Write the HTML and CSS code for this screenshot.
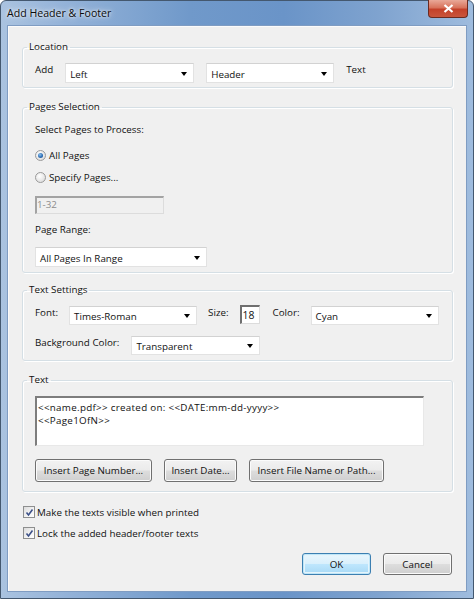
FILE: index.html
```html
<!DOCTYPE html>
<html lang="en">
<head>
  <meta charset="UTF-8">
  <title>Add Header &amp; Footer</title>
  <link rel="stylesheet" href="styles.css">
</head>
<body>
  <div class="window">
    <div class="titlebar">
      <span class="title">Add Header &amp; Footer</span>
      <div class="close">
        <svg width="11" height="9" viewBox="0 0 11 9"><path d="M1.5 1 L9.5 8 M9.5 1 L1.5 8" stroke="#fff" stroke-width="2.2"/></svg>
      </div>
    </div>

    <div class="client">
      <fieldset class="group location">
        <legend>Location</legend>
        <div class="row">
          <span class="label">Add</span>
          <div class="combo combo-left"><span>Left</span><i class="arrow"></i></div>
          <div class="combo combo-pos"><span>Header</span><i class="arrow"></i></div>
          <span class="label">Text</span>
        </div>
      </fieldset>

      <fieldset class="group pages">
        <legend>Pages Selection</legend>
        <div class="line">Select Pages to Process:</div>
        <div class="radio-row first"><span class="radio checked"></span>All Pages</div>
        <div class="radio-row"><span class="radio"></span>Specify Pages...</div>
        <div class="edit disabled">1-32</div>
        <div class="line range-label">Page Range:</div>
        <div class="combo combo-range"><span>All Pages In Range</span><i class="arrow"></i></div>
      </fieldset>

      <fieldset class="group settings">
        <legend>Text Settings</legend>
        <div class="row">
          <span class="label">Font:</span>
          <div class="combo combo-font"><span>Times-Roman</span><i class="arrow"></i></div>
          <span class="label size-label">Size:</span>
          <div class="edit size">18</div>
          <span class="label color-label">Color:</span>
          <div class="combo combo-color"><span>Cyan</span><i class="arrow"></i></div>
        </div>
        <div class="row second">
          <span class="label">Background Color:</span>
          <div class="combo combo-bg"><span>Transparent</span><i class="arrow"></i></div>
        </div>
      </fieldset>

      <fieldset class="group text">
        <legend>Text</legend>
        <div class="textarea">&lt;&lt;name.pdf&gt;&gt; created on: &lt;&lt;DATE:mm-dd-yyyy&gt;&gt;<br>&lt;&lt;Page1OfN&gt;&gt;</div>
        <div class="buttons">
          <button class="btn btn-page">Insert Page Number...</button>
          <button class="btn btn-date">Insert Date...</button>
          <button class="btn btn-file">Insert File Name or Path...</button>
        </div>
      </fieldset>

      <div class="check-row first"><span class="check"><svg width="9" height="9" viewBox="0 0 9 9"><path d="M1.5 4.5 L3.5 7 L7.5 1.5" fill="none" stroke="#3d5188" stroke-width="1.6"/></svg></span>Make the texts visible when printed</div>
      <div class="check-row"><span class="check"><svg width="9" height="9" viewBox="0 0 9 9"><path d="M1.5 4.5 L3.5 7 L7.5 1.5" fill="none" stroke="#3d5188" stroke-width="1.6"/></svg></span>Lock the added header/footer texts</div>

      <div class="actions">
        <button class="btn btn-ok">OK</button>
        <button class="btn btn-cancel">Cancel</button>
      </div>
    </div>
  </div>
</body>
</html>
```

FILE: styles.css
```css
html, body {
  margin: 0;
  padding: 0;
}
body {
  width: 474px;
  height: 599px;
  font-family: 'Open Sans', 'Noto Sans', sans-serif;
  font-size: 9.8px;
  color: #111;
  background-color: #fff;
}
.window {
  box-sizing: border-box;
  width: 474px;
  height: 599px;
  border: 1px solid #44586f;
  border-radius: 6px 6px 0 0;
  background: linear-gradient(90deg, #aac3e0 0%, #93b2d8 14%, #7099ca 40%, #6a94c8 60%, #7fa3cf 80%, #9fbcde 100%);
  display: flex;
  flex-direction: column;
}
.titlebar {
  height: 24px;
  display: flex;
  justify-content: space-between;
  align-items: flex-start;
}
.title {
  padding: 4px 0 0 6px;
  font-size: 10.6px;
  line-height: 16px;
  color: #0b0b0b;
  text-shadow: 0 0 6px rgba(255, 255, 255, 0.9), 0 0 3px rgba(255, 255, 255, 0.8);
}
.close {
  width: 40px;
  height: 18px;
  margin: -1px 5px 0 0;
  box-sizing: border-box;
  border: 1px solid #6b2a20;
  border-top: none;
  border-radius: 0 0 4px 4px;
  background: linear-gradient(#e9a898 0%, #d8735c 45%, #c4412a 55%, #c9553c 100%);
  display: flex;
  align-items: center;
  justify-content: center;
}
.client {
  height: 567px;
  margin: 0 6px;
  box-sizing: border-box;
  border: 1px solid #7f9cc2;
  background-color: #f0f0f0;
  box-shadow: inset 1px 1px 0 #fbfbfb;
  padding: 0 13px 0 14px;
}
.group {
  margin: 0;
  padding: 0 10px 0 12px;
  border: 1px solid #d5dfe5;
  border-radius: 3px;
  box-shadow: inset 1px 1px 0 #fff, 1px 1px 0 #fff;
}
.group legend {
  margin-left: -8px;
  padding: 0 2px;
  line-height: 16px;
}
.location {
  margin-top: 13px;
  padding-top: 8px;
  padding-bottom: 4px;
}
.pages {
  margin-top: 11px;
  padding-top: 7px;
  padding-bottom: 5px;
}
.settings {
  margin-top: 9px;
  padding-top: 8px;
  padding-bottom: 5px;
}
.text {
  margin-top: 11px;
  padding-top: 8px;
  padding-bottom: 9px;
}
.row {
  display: flex;
  align-items: flex-start;
}
.row .label {
  line-height: 16px;
  margin-top: -1px;
}
.row.second {
  margin-top: 11px;
}
.line {
  line-height: 16px;
}
.combo {
  box-sizing: border-box;
  height: 20px;
  background-color: #fff;
  border: 1px solid #e2e2e2;
  border-top-color: #d2d2d2;
  display: flex;
  align-items: center;
  justify-content: space-between;
  padding: 2px 6px 0 4px;
}
.arrow {
  width: 0;
  height: 0;
  border-left: 3.5px solid transparent;
  border-right: 3.5px solid transparent;
  border-top: 4px solid #000;
  margin-top: -1px;
}
.combo-left {
  width: 129px;
  margin-left: 12px;
}
.combo-pos {
  width: 128px;
  margin-left: 12px;
  margin-right: 12px;
}
.radio-row {
  display: flex;
  align-items: center;
  height: 16px;
  margin-top: 6px;
}
.radio-row.first {
  margin-top: 9px;
}
.radio {
  box-sizing: border-box;
  width: 11px;
  height: 11px;
  border-radius: 50%;
  border: 1px solid #9a9a9a;
  background: radial-gradient(circle at 40% 35%, #fff 0%, #e6e6e6 60%, #d4d4d4 100%);
  margin-right: 3px;
  display: flex;
  align-items: center;
  justify-content: center;
}
.radio.checked::before {
  content: '';
  width: 5px;
  height: 5px;
  border-radius: 50%;
  background: radial-gradient(circle at 40% 35%, #8ec2ee 0%, #2e6fb6 55%, #1c4b86 100%);
}
.edit {
  box-sizing: border-box;
  height: 18px;
  background-color: #fff;
  border: 1px solid #dcdcdc;
  border-top-color: #9a9a9a;
  border-left-color: #9a9a9a;
  line-height: 16px;
  padding-left: 2px;
}
.edit.disabled {
  width: 129px;
  margin-top: 11px;
  background-color: #f0f0f0;
  color: #8d8d8d;
  border-top: 2px solid #a3a3a3;
  border-left: 2px solid #a3a3a3;
  line-height: 14px;
  padding-left: 0;
}
.range-label {
  margin-top: 8px;
}
.combo-range {
  width: 172px;
  margin-top: 9px;
}
.settings .combo {
  height: 19px;
}
.combo-font {
  width: 128px;
  margin-left: 11px;
}
.size-label {
  margin-left: 11px;
}
.edit.size {
  width: 20px;
  height: 19px;
  margin-left: 11px;
  margin-top: -1px;
  border-top: 2px solid #6f6f6f;
  border-left: 2px solid #6f6f6f;
  padding-left: 1px;
  font-size: 10.4px;
}
.color-label {
  margin-left: 13px;
}
.combo-color {
  width: 128px;
  margin-left: 11px;
}
.combo-bg {
  width: 129px;
  margin-left: 12px;
}
.textarea {
  box-sizing: border-box;
  width: 389px;
  height: 50px;
  background-color: #fff;
  border: 1px solid #e8e8e8;
  border-top: 2px solid #7d7d7d;
  border-left: 2px solid #7d7d7d;
  padding: 3px 0 0 1px;
  line-height: 13px;
  letter-spacing: 0.3px;
}
.buttons {
  display: flex;
  gap: 12px;
  margin-top: 13px;
}
.btn {
  box-sizing: border-box;
  height: 23px;
  font-family: inherit;
  font-size: inherit;
  color: #111;
  border: 1px solid #707070;
  border-radius: 3px;
  background: linear-gradient(#f2f2f2 0%, #ebebeb 48%, #dddddd 52%, #cfcfcf 100%);
  box-shadow: inset 0 0 0 1px #fbfbfb;
  padding: 0;
}
.btn-page {
  width: 117px;
}
.btn-date {
  width: 73px;
}
.btn-file {
  width: 135px;
}
.check-row {
  display: flex;
  align-items: center;
  height: 16px;
  margin-top: 5px;
  padding-left: 1px;
}
.check-row.first {
  margin-top: 12px;
}
.check {
  box-sizing: border-box;
  width: 12px;
  height: 12px;
  border: 1px solid #8e8f8f;
  background: linear-gradient(135deg, #dcdcdc 0%, #f4f4f4 60%, #fff 100%);
  margin-right: 2px;
  display: flex;
  align-items: center;
  justify-content: center;
}
.actions {
  display: flex;
  justify-content: flex-end;
  gap: 12px;
  margin-top: 12px;
  margin-right: 1px;
}
.actions .btn {
  height: 22px;
  width: 69px;
}
.btn-ok {
  border-color: #3c7fb1;
  background: linear-gradient(#eaf6fd 0%, #d9f0fc 48%, #bee6fd 52%, #a7d9f5 100%);
  box-shadow: inset 0 0 0 1px #bfe6f8, inset 0 0 0 2px #e5f4fb;
}
```
